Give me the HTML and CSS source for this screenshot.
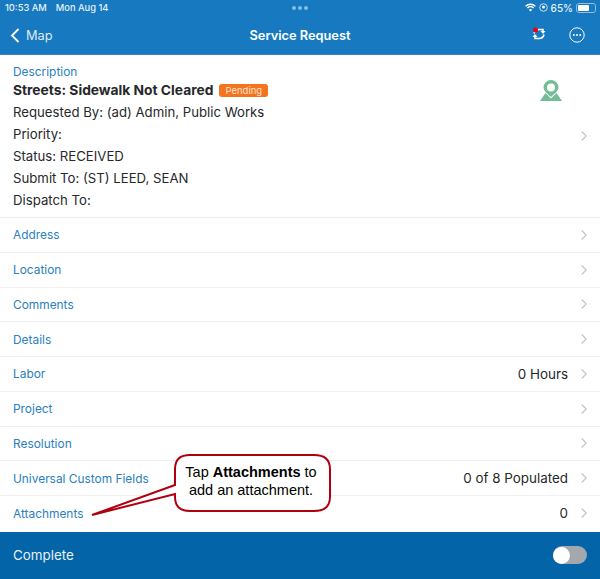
FILE: index.html
```html
<!DOCTYPE html>
<html>
<head>
    <title>Service Request</title>
    <link rel="stylesheet" href="styles.css">
</head>
<body>
    <div class="screen">
        <div class="top-bar">
            <div class="status-bar">
                <span class="status-time">10:53 AM</span>
                <span class="status-date">Mon Aug 14</span>
                <span class="status-dots"><i></i><i></i><i></i></span>
                <span class="status-right">
                    <svg width="11" height="9" viewBox="0 0 11 9">
                        <path d="M0.600 3.200 A7 7 0 0 1 10.400 3.200" fill="none" stroke="#fff" stroke-width="1.400"/>
                        <path d="M2.400 5 A4.400 4.400 0 0 1 8.600 5" fill="none" stroke="#fff" stroke-width="1.400"/>
                        <path d="M5.500 8.600 L3.900 6.800 A2.300 2.300 0 0 1 7.100 6.800 Z" fill="#fff"/>
                    </svg>
                    <svg width="9" height="9" viewBox="0 0 9 9">
                        <circle cx="4.500" cy="4.500" r="3.800" fill="none" stroke="#dcecf7" stroke-width="0.900"/>
                        <circle cx="4.500" cy="4" r="1.500" fill="#fff"/>
                    </svg>
                    <span>65%</span>
                    <span class="battery"><span class="battery-fill"></span></span>
                </span>
            </div>
            <div class="nav-bar">
                <div class="nav-back">
                    <svg width="10" height="15" viewBox="0 0 10 15">
                        <path d="M8.500 1 L2 7.500 L8.500 14" fill="none" stroke="#fff" stroke-width="1.800"/>
                    </svg>
                    <span>Map</span>
                </div>
                <div class="nav-title">Service Request</div>
                <div class="nav-actions">
                    <svg class="sync-icon" width="14" height="14" viewBox="0 0 14 14">
                        <path d="M2 6.500 Q3 2.500 7 2.500 L11 2.500 L11 4" fill="none" stroke="#fff" stroke-width="1.600"/>
                        <path d="M8.500 4 L13.500 4 L11 7 Z" fill="#fff"/>
                        <path d="M12 7.500 Q11 11.500 7 11.500 L3 11.500 L3 10" fill="none" stroke="#fff" stroke-width="1.600"/>
                        <path d="M5.500 10 L0.500 10 L3 7 Z" fill="#fff"/>
                        <circle cx="3.500" cy="3" r="2.500" fill="#e8001c"/>
                    </svg>
                    <svg width="16" height="16" viewBox="0 0 16 16">
                        <circle cx="8" cy="8" r="7.200" fill="none" stroke="#fff" stroke-width="1"/>
                        <circle cx="4.800" cy="8" r="1" fill="#fff"/>
                        <circle cx="8" cy="8" r="1" fill="#fff"/>
                        <circle cx="11.200" cy="8" r="1" fill="#fff"/>
                    </svg>
                </div>
            </div>
        </div>

        <div class="content">
            <div class="summary">
                <div class="summary-text">
                    <div class="link-label">Description</div>
                    <div class="summary-title">
                        <b>Streets: Sidewalk Not Cleared</b>
                        <span class="badge">Pending</span>
                    </div>
                    <div class="summary-line">Requested By: (ad) Admin, Public Works</div>
                    <div class="summary-line">Priority:</div>
                    <div class="summary-line">Status: RECEIVED</div>
                    <div class="summary-line">Submit To: (ST) LEED, SEAN</div>
                    <div class="summary-line">Dispatch To:</div>
                </div>
                <svg class="map-pin" width="22" height="21" viewBox="0 0 22 21">
                    <path d="M5.500 13 L0 21 L22 21 L16.500 13 L11 18.500 Z" fill="#74bd97"/>
                    <path fill-rule="evenodd" d="M11 0 A7.500 7.500 0 0 1 18.500 7.500 C18.500 11 13.500 14.500 11 17 C8.500 14.500 3.500 11 3.500 7.500 A7.500 7.500 0 0 1 11 0 Z M11 3.500 A4 4 0 1 0 11 11.500 A4 4 0 1 0 11 3.500 Z" fill="#74bd97"/>
                </svg>
                <svg class="chevron summary-chevron" width="6" height="10" viewBox="0 0 6 10">
                    <path d="M0.700 0.500 L5.200 5 L0.700 9.500" fill="none" stroke="#c4c4c9" stroke-width="1.200"/>
                </svg>
            </div>

            <div class="row">
                <span class="link-label">Address</span>
                <svg class="chevron" width="6" height="10" viewBox="0 0 6 10"><path d="M0.700 0.500 L5.200 5 L0.700 9.500" fill="none" stroke="#c4c4c9" stroke-width="1.200"/></svg>
            </div>
            <div class="row">
                <span class="link-label">Location</span>
                <svg class="chevron" width="6" height="10" viewBox="0 0 6 10"><path d="M0.700 0.500 L5.200 5 L0.700 9.500" fill="none" stroke="#c4c4c9" stroke-width="1.200"/></svg>
            </div>
            <div class="row">
                <span class="link-label">Comments</span>
                <svg class="chevron" width="6" height="10" viewBox="0 0 6 10"><path d="M0.700 0.500 L5.200 5 L0.700 9.500" fill="none" stroke="#c4c4c9" stroke-width="1.200"/></svg>
            </div>
            <div class="row">
                <span class="link-label">Details</span>
                <svg class="chevron" width="6" height="10" viewBox="0 0 6 10"><path d="M0.700 0.500 L5.200 5 L0.700 9.500" fill="none" stroke="#c4c4c9" stroke-width="1.200"/></svg>
            </div>
            <div class="row">
                <span class="link-label">Labor</span>
                <span class="row-value">0 Hours</span>
                <svg class="chevron" width="6" height="10" viewBox="0 0 6 10"><path d="M0.700 0.500 L5.200 5 L0.700 9.500" fill="none" stroke="#c4c4c9" stroke-width="1.200"/></svg>
            </div>
            <div class="row">
                <span class="link-label">Project</span>
                <svg class="chevron" width="6" height="10" viewBox="0 0 6 10"><path d="M0.700 0.500 L5.200 5 L0.700 9.500" fill="none" stroke="#c4c4c9" stroke-width="1.200"/></svg>
            </div>
            <div class="row">
                <span class="link-label">Resolution</span>
                <svg class="chevron" width="6" height="10" viewBox="0 0 6 10"><path d="M0.700 0.500 L5.200 5 L0.700 9.500" fill="none" stroke="#c4c4c9" stroke-width="1.200"/></svg>
            </div>
            <div class="row">
                <span class="link-label">Universal Custom Fields</span>
                <span class="row-value">0 of 8 Populated</span>
                <svg class="chevron" width="6" height="10" viewBox="0 0 6 10"><path d="M0.700 0.500 L5.200 5 L0.700 9.500" fill="none" stroke="#c4c4c9" stroke-width="1.200"/></svg>
            </div>
            <div class="row">
                <span class="link-label">Attachments</span>
                <span class="row-value">0</span>
                <svg class="chevron" width="6" height="10" viewBox="0 0 6 10"><path d="M0.700 0.500 L5.200 5 L0.700 9.500" fill="none" stroke="#c4c4c9" stroke-width="1.200"/></svg>
            </div>
        </div>

        <div class="bottom-bar">
            <span>Complete</span>
            <span class="toggle"><span class="toggle-knob"></span></span>
        </div>

        <!-- callout sits over the rows -->
        <svg class="callout-shape" width="246" height="66" viewBox="0 0 246 66">
            <path d="M85 15 Q85 1 100 1 L224 1 Q240 1 240 15 L240 43 Q240 57 224 57 L100 57 Q85 57 85 43 L85 40 L2 61 L85 31 Z" fill="#fff" stroke="#b00010" stroke-width="2"/>
        </svg>
        <div class="callout-text">Tap <b>Attachments</b> to<br>add an attachment.</div>
    </div>
</body>
</html>
```

FILE: styles.css
```css
html, body {
    margin: 0;
    padding: 0;
}
body {
    background: #fff;
    font-family: Inter, "Noto Sans", sans-serif;
    color: #26282b;
}
.screen {
    position: relative;
    width: 600px;
    height: 579px;
    overflow: hidden;
    display: flex;
    flex-direction: column;
}

/* top bars */
.top-bar {
    height: 55px;
    background: #1779bf;
    color: #fff;
    box-sizing: border-box;
    border-bottom: 1px solid #2c86c6;
}
.status-bar {
    position: relative;
    height: 15px;
    display: flex;
    align-items: center;
    padding: 0 5px;
    font-size: 9.300px;
    font-weight: 500;
    color: #e6f1f9;
}
.status-date {
    margin-left: 9px;
}
.status-dots {
    position: absolute;
    left: 292px;
    top: 6px;
    display: flex;
    gap: 2px;
}
.status-dots i {
    width: 4px;
    height: 4px;
    border-radius: 50%;
    background: #7cc0ec;
}
.status-right {
    margin-left: auto;
    display: flex;
    align-items: center;
    gap: 3px;
    font-size: 10px;
}
.battery {
    position: relative;
    width: 16px;
    height: 6px;
    margin-right: -1px;
    border: 1px solid #8fc0e2;
    border-radius: 3px;
    padding: 1px;
    box-sizing: content-box;
}
.battery-fill {
    display: block;
    width: 11px;
    height: 6px;
    background: #fff;
    border-radius: 1px;
}
.nav-bar {
    position: relative;
    height: 39px;
    display: flex;
    align-items: center;
    padding: 1px 15px 0 10px;
    box-sizing: border-box;
    font-size: 12.800px;
}
.nav-back {
    display: flex;
    align-items: center;
    gap: 6px;
    color: #dcecf7;
}
.nav-title {
    position: absolute;
    left: 0;
    right: 0;
    text-align: center;
    font-weight: 600;
}
.nav-actions {
    margin-left: auto;
    display: flex;
    align-items: center;
    gap: 23px;
}
.sync-icon {
    margin-top: -2px;
}

/* list */
.content {
    flex: 1;
}
.link-label {
    color: #2b80bf;
    font-size: 11.900px;
}
.summary {
    position: relative;
    height: 163px;
    box-sizing: border-box;
    padding: 9px 13px 0;
    border-bottom: 1px solid #ececef;
}
.summary-text {
    display: flex;
    flex-direction: column;
}
.summary-text .link-label {
    line-height: 15px;
}
.summary-title {
    display: flex;
    align-items: center;
    gap: 6px;
    height: 22px;
    font-size: 13.800px;
}
.summary-title b {
    font-weight: 700;
}
.badge {
    background: #f4731d;
    color: #fde4d2;
    font-size: 9.500px;
    line-height: 13px;
    padding: 0 6px;
    border-radius: 3px;
}
.summary-line {
    font-size: 13.200px;
    line-height: 22px;
}
.map-pin {
    position: absolute;
    left: 540px;
    top: 25px;
}
.chevron {
    flex: none;
}
.summary-chevron {
    position: absolute;
    left: 581px;
    top: 76px;
}
.row {
    height: 34.750px;
    box-sizing: border-box;
    display: flex;
    align-items: center;
    padding: 0 13px;
    border-bottom: 1px solid #efeff1;
}
.row:last-child {
    border-bottom: 0;
}
.row .chevron {
    margin-left: 13px;
}
.row .link-label {
    margin-right: auto;
}
.row-value {
    font-size: 13.400px;
}
.row:not(:has(.row-value)) .chevron {
    margin-left: auto;
}

/* bottom */
.bottom-bar {
    height: 47px;
    background: #0364a8;
    color: #e9f1f7;
    display: flex;
    align-items: center;
    justify-content: space-between;
    padding: 0 13px 1px;
    box-sizing: border-box;
    font-size: 13.400px;
}
.toggle {
    width: 34px;
    height: 18px;
    background: #a3a7ae;
    border-radius: 9px;
    display: flex;
    align-items: center;
}
.toggle-knob {
    width: 17px;
    height: 17px;
    background: #fff;
    border-radius: 50%;
}

/* callout */
.callout-shape {
    position: absolute;
    left: 90px;
    top: 454px;
}
.callout-text {
    position: absolute;
    left: 173px;
    top: 463px;
    width: 156px;
    text-align: center;
    font-family: "Liberation Sans", Arial, sans-serif;
    font-size: 14.500px;
    line-height: 18px;
    color: #000;
}
.callout-text b {
    font-weight: 700;
}
```
